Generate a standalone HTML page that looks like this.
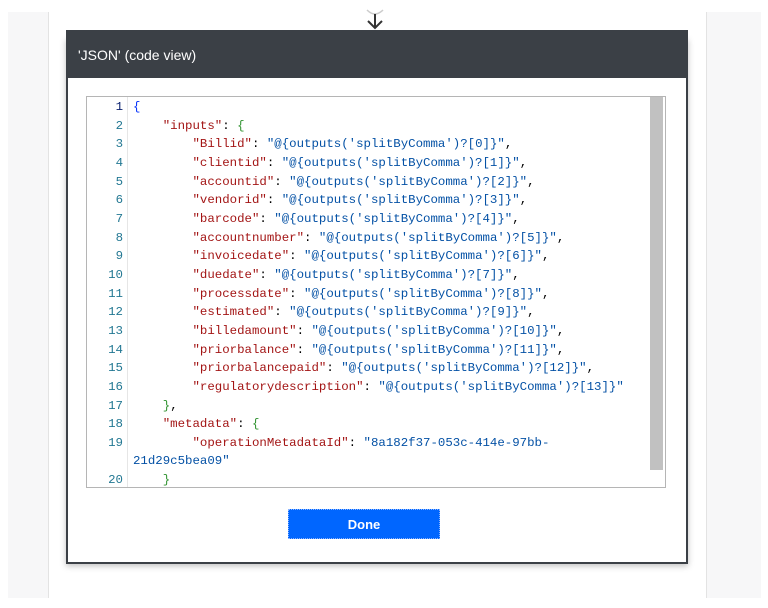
<!DOCTYPE html>
<html><head><style>
body{margin:0;width:768px;height:608px;background:#fff;position:relative;overflow:hidden;font-family:"Liberation Sans",sans-serif}
.side{position:absolute;top:12px;height:586px;background:#f7f7f8}
.modal{position:absolute;left:66px;top:38px;width:618px;height:524px;background:#fff;border:2px solid #3b4046;border-top:none;box-shadow:0 2px 6px rgba(0,0,0,.25)}
.hdr{position:absolute;left:66px;top:30px;width:622px;height:68px;background:#3b4046;color:#fff;font-size:14px;line-height:50px;box-sizing:border-box;padding-left:12px;height:48px}
.ed{position:absolute;left:86px;top:96px;width:578px;height:390px;border:1px solid #b5b5b5;background:#fff;overflow:hidden}
.sb{position:absolute;left:563px;top:0;width:13px;height:373px;background:#c1c1c1}
.code{position:absolute;left:0;top:1px;font-family:"Liberation Mono",monospace;font-size:12.4px;line-height:18.65px;white-space:pre}
.ln{display:inline-block;width:36px;text-align:right;color:#237893;padding-right:10px}
.k{color:#a31515}.s{color:#0451a5}.b{color:#0431fa}.g{color:#319331}
.gut{position:absolute;left:40px;top:0;width:1px;height:390px;background:#e6e6e6}
.done{position:absolute;left:288px;top:509px;width:152px;height:30px;background:#0066ff;border:1px dotted #8ab4ff;color:#fff;font-size:13px;font-weight:bold;text-align:center;line-height:30px;box-sizing:border-box}
</style></head><body>
<div class="side" style="left:8px;width:40px;border-right:1px solid #e3e3e3"></div>
<div class="side" style="left:706px;width:54px;border-left:1px solid #e3e3e3"></div>
<svg style="position:absolute;left:363px;top:8px" width="24" height="22"><path d="M4 2 Q12 10 20 2" fill="none" stroke="#ccc" stroke-width="1.5"/><path d="M12 6 V20 M5 13 L12 20 L19 13" fill="none" stroke="#333" stroke-width="2"/></svg>
<div class="modal"></div>
<div class="hdr">'JSON' (code view)</div>
<div class="ed">
<div class="gut"></div>
<div class="sb"></div>
<div class="code"><span class="ln" style="color:#0b216f">1</span><span class="b">{</span>
<span class="ln">2</span>    <span class="k">"inputs"</span>: <span class="g">{</span>
<span class="ln">3</span>        <span class="k">"Billid"</span>: <span class="s">"@{outputs('splitByComma')?[0]}"</span>,
<span class="ln">4</span>        <span class="k">"clientid"</span>: <span class="s">"@{outputs('splitByComma')?[1]}"</span>,
<span class="ln">5</span>        <span class="k">"accountid"</span>: <span class="s">"@{outputs('splitByComma')?[2]}"</span>,
<span class="ln">6</span>        <span class="k">"vendorid"</span>: <span class="s">"@{outputs('splitByComma')?[3]}"</span>,
<span class="ln">7</span>        <span class="k">"barcode"</span>: <span class="s">"@{outputs('splitByComma')?[4]}"</span>,
<span class="ln">8</span>        <span class="k">"accountnumber"</span>: <span class="s">"@{outputs('splitByComma')?[5]}"</span>,
<span class="ln">9</span>        <span class="k">"invoicedate"</span>: <span class="s">"@{outputs('splitByComma')?[6]}"</span>,
<span class="ln">10</span>        <span class="k">"duedate"</span>: <span class="s">"@{outputs('splitByComma')?[7]}"</span>,
<span class="ln">11</span>        <span class="k">"processdate"</span>: <span class="s">"@{outputs('splitByComma')?[8]}"</span>,
<span class="ln">12</span>        <span class="k">"estimated"</span>: <span class="s">"@{outputs('splitByComma')?[9]}"</span>,
<span class="ln">13</span>        <span class="k">"billedamount"</span>: <span class="s">"@{outputs('splitByComma')?[10]}"</span>,
<span class="ln">14</span>        <span class="k">"priorbalance"</span>: <span class="s">"@{outputs('splitByComma')?[11]}"</span>,
<span class="ln">15</span>        <span class="k">"priorbalancepaid"</span>: <span class="s">"@{outputs('splitByComma')?[12]}"</span>,
<span class="ln">16</span>        <span class="k">"regulatorydescription"</span>: <span class="s">"@{outputs('splitByComma')?[13]}"</span>
<span class="ln">17</span>    <span class="g">}</span>,
<span class="ln">18</span>    <span class="k">"metadata"</span>: <span class="g">{</span>
<span class="ln">19</span>        <span class="k">"operationMetadataId"</span>: <span class="s">"8a182f37-053c-414e-97bb-</span>
<span class="ln"></span><span class="s">21d29c5bea09"</span>
<span class="ln">20</span>    <span class="g">}</span></div>
</div>
<div class="done">Done</div>
</body></html>
